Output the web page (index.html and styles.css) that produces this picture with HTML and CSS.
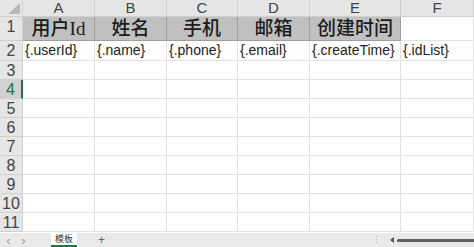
FILE: index.html
```html
<!DOCTYPE html>
<html lang="zh-CN">
<head>
    <meta charset="UTF-8">
    <title>模板</title>
    <link rel="stylesheet" href="styles.css">
</head>
<body>
    <div class="sheet">
        <!-- column headers -->
        <div class="corner"><svg width="12" height="11" viewBox="0 0 12 11"><polygon points="12,0 12,11 0,11" fill="#b9b9b9"/></svg></div>
        <div class="colhead">A</div>
        <div class="colhead">B</div>
        <div class="colhead">C</div>
        <div class="colhead">D</div>
        <div class="colhead">E</div>
        <div class="colhead">F</div>

        <!-- row 1 -->
        <div class="rowhead">1</div>
        <div class="cell title">用户Id</div>
        <div class="cell title">姓名</div>
        <div class="cell title">手机</div>
        <div class="cell title">邮箱</div>
        <div class="cell title">创建时间</div>
        <div class="cell"></div>

        <!-- row 2 -->
        <div class="rowhead">2</div>
        <div class="cell field">{.userId}</div>
        <div class="cell field">{.name}</div>
        <div class="cell field">{.phone}</div>
        <div class="cell field">{.email}</div>
        <div class="cell field">{.createTime}</div>
        <div class="cell field">{.idList}</div>

        <div class="rowhead">3</div>
        <div class="cell"></div><div class="cell"></div><div class="cell"></div><div class="cell"></div><div class="cell"></div><div class="cell"></div>
        <div class="rowhead active">4</div>
        <div class="cell"></div><div class="cell"></div><div class="cell"></div><div class="cell"></div><div class="cell"></div><div class="cell"></div>
        <div class="rowhead">5</div>
        <div class="cell"></div><div class="cell"></div><div class="cell"></div><div class="cell"></div><div class="cell"></div><div class="cell"></div>
        <div class="rowhead">6</div>
        <div class="cell"></div><div class="cell"></div><div class="cell"></div><div class="cell"></div><div class="cell"></div><div class="cell"></div>
        <div class="rowhead">7</div>
        <div class="cell"></div><div class="cell"></div><div class="cell"></div><div class="cell"></div><div class="cell"></div><div class="cell"></div>
        <div class="rowhead">8</div>
        <div class="cell"></div><div class="cell"></div><div class="cell"></div><div class="cell"></div><div class="cell"></div><div class="cell"></div>
        <div class="rowhead">9</div>
        <div class="cell"></div><div class="cell"></div><div class="cell"></div><div class="cell"></div><div class="cell"></div><div class="cell"></div>
        <div class="rowhead">10</div>
        <div class="cell"></div><div class="cell"></div><div class="cell"></div><div class="cell"></div><div class="cell"></div><div class="cell"></div>
        <div class="rowhead">11</div>
        <div class="cell"></div><div class="cell"></div><div class="cell"></div><div class="cell"></div><div class="cell"></div><div class="cell"></div>
    </div>

    <div class="tabbar">
        <span class="nav">&lsaquo;</span>
        <span class="nav">&rsaquo;</span>
        <span class="tab">模板</span>
        <span class="add">+</span>
        <span class="spacer"></span>
        <span class="grip">⋮</span>
        <span class="arrow"></span>
        <span class="thumb"></span>
    </div>
</body>
</html>
```

FILE: styles.css
```css
html, body { margin: 0; padding: 0; overflow: hidden; background: #fff; }
body { width: 474px; height: 247px; font-family: "Liberation Sans", "Noto Sans CJK SC", sans-serif; }

.sheet { display: grid; grid-template-columns: 23px 72px 72px 71px 72px 91px 73px; grid-template-rows: 17px 24px 20px repeat(9, 19px); height: 233px; overflow: hidden; }
.sheet > div { box-sizing: border-box; border-right: 1px solid #e2e2e2; border-bottom: 1px solid #e2e2e2; overflow: hidden; white-space: nowrap; }

.corner { background: #e6e6e6; display: flex; align-items: flex-end; justify-content: flex-end; padding: 0 2px 2px 0; border-color: #d0d0d0 !important; }
.colhead { background: #e6e6e6; color: #444; font-size: 15px; line-height: 16px; text-align: center; border-color: #d0d0d0 !important; }
.rowhead { background: #e6e6e6; color: #444; font-size: 16px; line-height: 19px; text-align: center; border-color: #d0d0d0 !important; }
.rowhead.active { background: #d2d2d2; color: #217346; border-right: 2px solid #217346 !important; }

.cell { font-size: 14px; color: #222; }
.title { background: #c0c0c0; border-color: #9f9f9f !important; font-family: "Liberation Serif", "Noto Sans CJK SC", serif; font-weight: 500; font-size: 19px; line-height: 23px; text-align: center; color: #1c1c1c; }
.field { padding-left: 2px; line-height: 19px; }

.tabbar { display: flex; align-items: center; height: 14px; background: #e9e9e9; font-size: 11px; color: #999; }
.nav { width: 15px; text-align: center; font-size: 13px; }
.nav:first-child { margin-left: 1px; }
.tab { margin-left: 20px; width: 26px; height: 14px; background: #fff; color: #333; font-size: 9px; line-height: 12px; text-align: center; box-sizing: border-box; border-bottom: 2px solid #217346; }
.add { margin-left: 21px; font-size: 12px; color: #666; }
.spacer { flex: 1; }
.grip { color: #aaa; font-size: 9px; margin-right: 9px; }
.arrow { width: 0; height: 0; border-top: 3px solid transparent; border-bottom: 3px solid transparent; border-right: 4px solid #555; margin-right: 3px; }
.thumb { width: 77px; height: 3px; background: #606060; border-radius: 2px 0 0 2px; }
```
